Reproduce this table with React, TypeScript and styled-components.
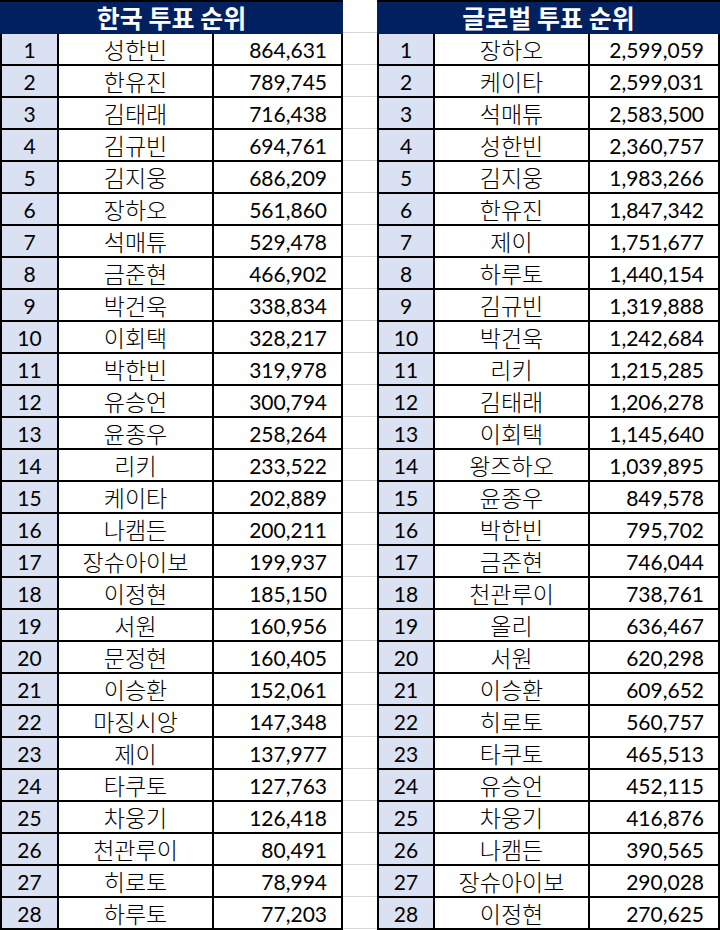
import React from 'react'
import styled, { createGlobalStyle } from 'styled-components'

const korea: [string, string][] = [
  ['성한빈', '864,631'],
  ['한유진', '789,745'],
  ['김태래', '716,438'],
  ['김규빈', '694,761'],
  ['김지웅', '686,209'],
  ['장하오', '561,860'],
  ['석매튜', '529,478'],
  ['금준현', '466,902'],
  ['박건욱', '338,834'],
  ['이회택', '328,217'],
  ['박한빈', '319,978'],
  ['유승언', '300,794'],
  ['윤종우', '258,264'],
  ['리키', '233,522'],
  ['케이타', '202,889'],
  ['나캠든', '200,211'],
  ['장슈아이보', '199,937'],
  ['이정현', '185,150'],
  ['서원', '160,956'],
  ['문정현', '160,405'],
  ['이승환', '152,061'],
  ['마징시앙', '147,348'],
  ['제이', '137,977'],
  ['타쿠토', '127,763'],
  ['차웅기', '126,418'],
  ['천관루이', '80,491'],
  ['히로토', '78,994'],
  ['하루토', '77,203'],
]

const global: [string, string][] = [
  ['장하오', '2,599,059'],
  ['케이타', '2,599,031'],
  ['석매튜', '2,583,500'],
  ['성한빈', '2,360,757'],
  ['김지웅', '1,983,266'],
  ['한유진', '1,847,342'],
  ['제이', '1,751,677'],
  ['하루토', '1,440,154'],
  ['김규빈', '1,319,888'],
  ['박건욱', '1,242,684'],
  ['리키', '1,215,285'],
  ['김태래', '1,206,278'],
  ['이회택', '1,145,640'],
  ['왕즈하오', '1,039,895'],
  ['윤종우', '849,578'],
  ['박한빈', '795,702'],
  ['금준현', '746,044'],
  ['천관루이', '738,761'],
  ['올리', '636,467'],
  ['서원', '620,298'],
  ['이승환', '609,652'],
  ['히로토', '560,757'],
  ['타쿠토', '465,513'],
  ['유승언', '452,115'],
  ['차웅기', '416,876'],
  ['나캠든', '390,565'],
  ['장슈아이보', '290,028'],
  ['이정현', '270,625'],
]

const GlobalStyle = createGlobalStyle`
  body {
    margin: 0;
    background: #ffffff;
    font-family: "Lato", "Noto Sans CJK KR", sans-serif;
  }
`

const Page = styled.div`
  display: flex;
  width: 720px;
  height: 930px;
  overflow: hidden;
`

const Table = styled.div<{ $cols: string }>`
  display: grid;
  grid-template-columns: ${p => p.$cols};
  grid-auto-rows: 30px;
  gap: 2px;
  padding: 2px;
  background: #000000;
  width: 343px;
  box-sizing: border-box;
  flex-shrink: 0;
`

const Header = styled.div`
  grid-column: 1 / -1;
  background: #002060;
  color: #ffffff;
  font-family: "Noto Sans CJK KR", sans-serif;
  font-weight: 700;
  font-size: 25px;
  display: flex;
  align-items: center;
  justify-content: center;
  margin: 0 -2px -2px;
  padding-bottom: 2px;
  line-height: 1;
`

const Cell = styled.div<{ $align?: 'center' | 'right'; $rank?: boolean }>`
  display: flex;
  align-items: center;
  justify-content: ${p => (p.$align === 'right' ? 'flex-end' : 'center')};
  padding-right: ${p => (p.$align === 'right' ? '14px' : '0')};
  background: ${p => (p.$rank ? '#d9e1f2' : '#ffffff')};
  color: #000000;
  font-size: 21px;
  line-height: 1;
  white-space: nowrap;
`

const Name = styled.span`
  font-family: "Noto Sans CJK KR", sans-serif;
  font-weight: 300;
  font-size: 23px;
`

const Spacer = styled.div`
  width: 34px;
  flex-shrink: 0;
  background-image: repeating-linear-gradient(
    to bottom,
    #ffffff 0px,
    #ffffff 31px,
    #d6d6d6 31px,
    #d6d6d6 32px
  );
  background-position: 0 1px;
`

type RankProps = { title: string; rows: [string, string][]; cols: string }

const RankTable = ({ title, rows, cols }: RankProps) => (
  <Table $cols={cols}>
    <Header>{title}</Header>
    {rows.map(([name, votes], i) => (
      <React.Fragment key={name}>
        <Cell $rank>{i + 1}</Cell>
        <Cell>
          <Name>{name}</Name>
        </Cell>
        <Cell $align="right">{votes}</Cell>
      </React.Fragment>
    ))}
  </Table>
)

export default function App() {
  return (
    <>
      <GlobalStyle />
      <Page>
        <RankTable title="한국 투표 순위" rows={korea} cols="55px 153px 127px" />
        <Spacer />
        <RankTable title="글로벌 투표 순위" rows={global} cols="54px 153px 128px" />
      </Page>
    </>
  )
}
